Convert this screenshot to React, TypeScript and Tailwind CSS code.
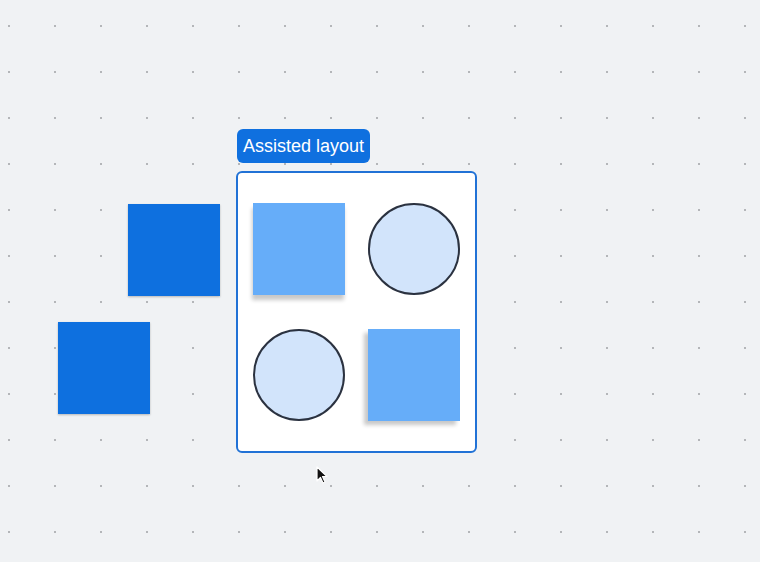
export default function App() {
  return (
    <div className="relative w-[760px] h-[562px] overflow-hidden bg-[#f0f2f4] font-['Liberation_Sans',Arial,sans-serif]">
      {/* dot grid */}
      <svg className="absolute inset-0" width="760" height="562">
        <defs>
          <pattern id="dots" x="8" y="25" width="46" height="46" patternUnits="userSpaceOnUse">
            <rect x="0" y="0" width="2" height="2" fill="#b4b6b9" />
          </pattern>
        </defs>
        <rect width="760" height="562" fill="url(#dots)" />
      </svg>

      {/* loose squares */}
      <div className="absolute left-[128px] top-[204px] w-[92px] h-[92px] bg-[#0e70df] shadow-[0_1px_2px_rgba(0,0,0,0.25)]" />
      <div className="absolute left-[58px] top-[322px] w-[92px] h-[92px] bg-[#0e70df] shadow-[0_1px_2px_rgba(0,0,0,0.25)]" />

      {/* label */}
      <div className="absolute left-[237px] top-[129px] h-[34px] px-[6px] flex items-center rounded-[6px] bg-[#0f70df] text-white text-[18px] leading-none">
        Assisted layout
      </div>

      {/* assisted layout frame */}
      <div className="absolute left-[236px] top-[171px] w-[241px] h-[282px] rounded-[6px] border-2 border-[#2172d6] bg-white grid grid-cols-[92px_92px] grid-rows-[92px_92px] gap-x-[23px] gap-y-[34px] pl-[15px] pt-[30px]">
        <div className="w-[92px] h-[92px] bg-[#66adf9] shadow-[-1px_5px_4px_rgba(0,0,0,0.22)]" />
        <div className="w-[92px] h-[92px] rounded-full bg-[#d2e4fb] border-2 border-[#2b3240]" />
        <div className="w-[92px] h-[92px] rounded-full bg-[#d2e4fb] border-2 border-[#2b3240]" />
        <div className="w-[92px] h-[92px] bg-[#66adf9] shadow-[-4px_4px_4px_rgba(0,0,0,0.22)]" />
      </div>

      {/* cursor */}
      <svg className="absolute left-[316px] top-[466px]" width="14" height="20" viewBox="0 0 14 20">
        <path d="M1 1 L1 15 L4.5 11.5 L7 17 L9 16 L6.5 10.5 L11 10.5 Z" fill="#111" stroke="#fff" strokeWidth="1.2" strokeLinejoin="round" />
      </svg>
    </div>
  );
}
